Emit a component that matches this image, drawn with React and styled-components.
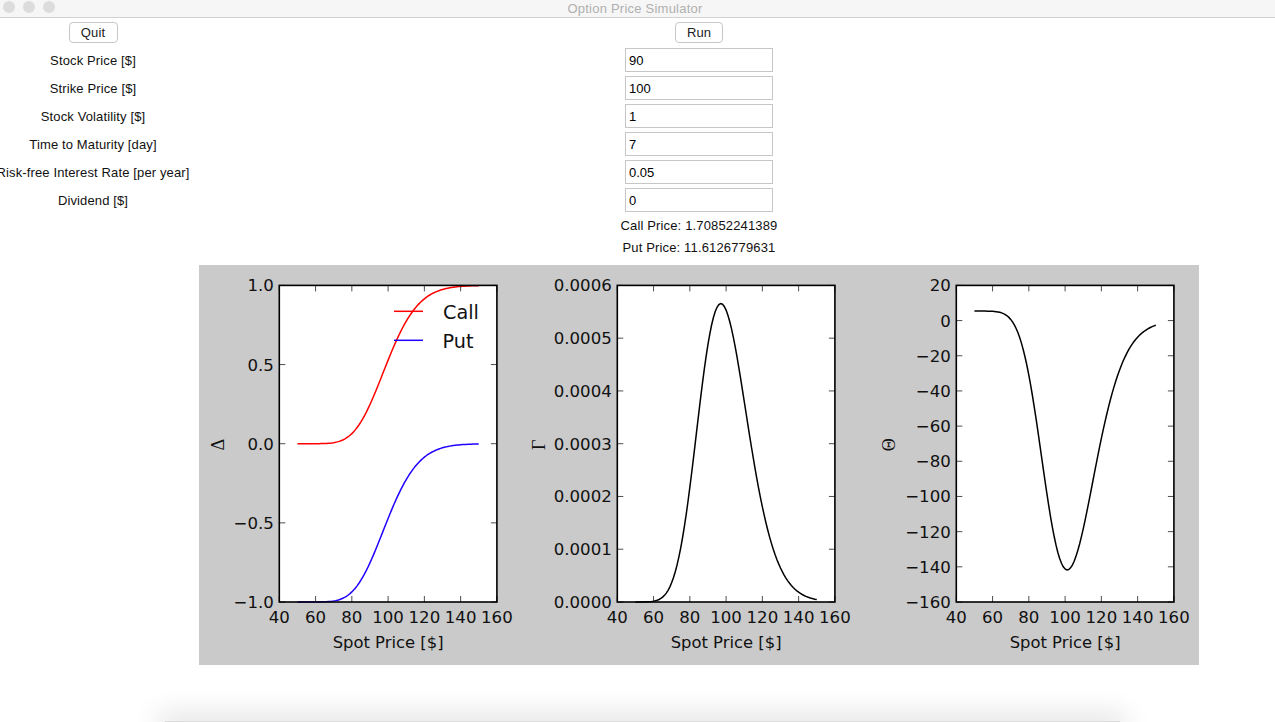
import { Fragment } from "react";
import styled, { createGlobalStyle } from "styled-components";

const GlobalStyle = createGlobalStyle`
html, body {
    margin: 0;
    height: 722px;
    overflow: hidden;
    background: #fff;
    font-family: "Liberation Sans", Arial, sans-serif;
}
`;

const Page = styled.div`
    position: relative;
    height: 722px;
    overflow: hidden;
`;

const TitleBar = styled.div`
    position: relative;
    box-sizing: border-box;
    height: 18px;
    padding-right: 5px;
    background: #f6f6f6;
    border-bottom: 1px solid #d2d2d2;
    display: flex;
    justify-content: center;
    align-items: center;
`;

const Title = styled.div`
    font-size: 13px;
    line-height: 15px;
    letter-spacing: 0.23px;
    color: #b0b0b0;
`;

const Lights = styled.div`
    position: absolute;
    left: 3px;
    top: 1px;
    display: flex;
    gap: 8px;
`;

const Light = styled.span`
    width: 12px;
    height: 12px;
    border-radius: 50%;
    background: #dcdcdc;
`;

const Form = styled.div`
    display: grid;
    grid-template-columns: 186px 1026px;
    grid-auto-rows: 28px;
    justify-items: center;
    align-items: center;
    font-size: 13px;
    letter-spacing: 0.13px;
    color: #111;
`;

const Button = styled.button`
    box-sizing: border-box;
    width: ${(p) => p.$width}px;
    height: 21px;
    padding: 0;
    background: #fff;
    border: 1px solid #c8c8c8;
    border-radius: 4px;
    font: 13px "Liberation Sans", Arial, sans-serif;
    letter-spacing: 0.13px;
    color: #222;
`;

const Label = styled.div`
    white-space: nowrap;
`;

const Field = styled.input`
    box-sizing: border-box;
    width: 148px;
    height: 24px;
    padding: 0 3px;
    border: 1px solid #c6c6c6;
    border-radius: 0;
    outline: none;
    font: 13px "Liberation Sans", Arial, sans-serif;
    color: #000;
`;

const Results = styled.div`
    display: grid;
    grid-template-columns: 186px 1026px;
    grid-auto-rows: 22px;
    align-items: center;
    font-size: 13px;
    letter-spacing: 0.15px;
    color: #111;
`;

const Result = styled.div`
    grid-column: 2;
    text-align: center;
`;

const PanelRow = styled.div`
    display: flex;
    padding: 7px 0 0 199px;
`;

const Panel = styled.div`
    width: 1000px;
    height: 400px;
    background: #cacaca;
    display: flex;
    gap: 20.4px;
`;

const Figure = styled.svg`
    display: block;
    width: 318px;
    height: 400px;
    flex: none;
    overflow: visible;
    font-family: "DejaVu Sans", sans-serif;
`;

const WindowEdge = styled.div`
    position: absolute;
    left: 165px;
    right: 155px;
    top: 721px;
    height: 6px;
    background: #dcdcdc;
    box-shadow: 0 0 28px 6px rgba(0, 0, 0, 0.14);
`;

const FRAME = { x: 80.3, y: 20.4, w: 217.6, h: 316.6 };
const XTICKS = [40, 60, 80, 100, 120, 140, 160];
const K = 100;
const V = 0.14;

const pdf = (d) => Math.exp((-d * d) / 2) / Math.sqrt(2 * Math.PI);
const cdf = (d) => {
    const t = 1 / (1 + 0.2316419 * Math.abs(d));
    const p = pdf(d) * t * (0.31938153 + t * (-0.356563782 + t * (1.781477937 + t * (-1.821255978 + t * 1.330274429))));
    return d >= 0 ? 1 - p : p;
};
const d1 = (s) => (Math.log(s / K) + (V * V) / 2) / V;

const callDelta = (s) => cdf(d1(s));
const putDelta = (s) => cdf(d1(s)) - 1;
const gamma = (s) => (0.000571 * 97.1 * pdf(d1(s))) / (0.3989 * s);
const theta = (s) => 5.4 * cdf(-(d1(s) - V)) - 3.62 * s * pdf(d1(s));

const curve = (fn, yMin, yMax) => {
    const pts = [];
    for (let s = 50; s <= 150; s += 1) {
        const x = FRAME.x + ((s - 40) / 120) * FRAME.w;
        const y = FRAME.y + ((yMax - fn(s)) / (yMax - yMin)) * FRAME.h;
        pts.push(`${x.toFixed(2)},${y.toFixed(2)}`);
    }
    return pts.join(" ");
};

const Plot = ({ yMin, yMax, yTicks, symbol, symbolX, lines, children }) => {
    const { x, y, w, h } = FRAME;
    const bottom = y + h;
    const right = x + w;
    const toY = (v) => y + ((yMax - v) / (yMax - yMin)) * h;
    return (
        <Figure viewBox="0 0 318 400">
            <rect x={x} y={y} width={w} height={h} fill="#fff" />
            {lines.map((l) => (
                <polyline key={l.id} points={curve(l.fn, yMin, yMax)} fill="none" stroke={l.color} strokeWidth="1.5" />
            ))}
            {children}
            <rect x={x} y={y} width={w} height={h} fill="none" stroke="#000" strokeWidth="1.6" />
            {XTICKS.map((t) => {
                const tx = x + ((t - 40) / 120) * w;
                return (
                    <g key={t}>
                        <path d={`M${tx} ${bottom}v-6M${tx} ${y}v6`} stroke="#000" strokeWidth="0.7" />
                        <text x={tx} y={bottom + 20.6} fontSize="16.6" textAnchor="middle" fill="#111">{t}</text>
                    </g>
                );
            })}
            {yTicks.map((t) => (
                <g key={t.label}>
                    <path d={`M${x} ${toY(t.v)}h6M${right} ${toY(t.v)}h-6`} stroke="#000" strokeWidth="0.7" />
                    <text x={x - 5.5} y={toY(t.v) + 6} fontSize="16.6" textAnchor="end" fill="#111">{t.label}</text>
                </g>
            ))}
            <text x={x + w / 2} y="382.5" fontSize="16.4" textAnchor="middle" fill="#111">Spot Price [$]</text>
            <text
                transform={`translate(${symbolX} ${y + h / 2 + 1}) rotate(-90)`}
                fontSize="18"
                textAnchor="middle"
                fill="#111"
                fontFamily="'Liberation Serif', serif"
            >
                {symbol}
            </text>
        </Figure>
    );
};

const Legend = () => (
    <g>
        <path d="M195 46.3h29" stroke="#f00" strokeWidth="1.5" />
        <text x="244" y="54" fontSize="19.2" fill="#111">Call</text>
        <path d="M195 75.3h29" stroke="#2000ff" strokeWidth="1.5" />
        <text x="243.5" y="83" fontSize="19.2" fill="#111">Put</text>
    </g>
);

const fields = [
    ["Stock Price [$]", "90"],
    ["Strike Price [$]", "100"],
    ["Stock Volatility [$]", "1"],
    ["Time to Maturity [day]", "7"],
    ["Risk-free Interest Rate [per year]", "0.05"],
    ["Dividend [$]", "0"],
];

const App = () => (
    <Page>
        <GlobalStyle />
        <TitleBar>
            <Lights>
                <Light />
                <Light />
                <Light />
            </Lights>
            <Title>Option Price Simulator</Title>
        </TitleBar>
        <Form>
            <Button $width={49}>Quit</Button>
            <Button $width={48}>Run</Button>
            {fields.map(([label, value]) => (
                <Fragment key={label}>
                    <Label>{label}</Label>
                    <Field defaultValue={value} />
                </Fragment>
            ))}
        </Form>
        <Results>
            <Result>Call Price: 1.70852241389</Result>
            <Result>Put Price: 11.6126779631</Result>
        </Results>
        <PanelRow>
            <Panel>
                <Plot
                    yMin={-1}
                    yMax={1}
                    symbol="Δ"
                    symbolX={25.3}
                    yTicks={[
                        { v: 1, label: "1.0" },
                        { v: 0.5, label: "0.5" },
                        { v: 0, label: "0.0" },
                        { v: -0.5, label: "−0.5" },
                        { v: -1, label: "−1.0" },
                    ]}
                    lines={[
                        { id: "call", color: "#f00", fn: callDelta },
                        { id: "put", color: "#2000ff", fn: putDelta },
                    ]}
                >
                    <Legend />
                </Plot>
                <Plot
                    yMin={0}
                    yMax={0.0006}
                    symbol="Γ"
                    symbolX={7.6}
                    yTicks={[0.0006, 0.0005, 0.0004, 0.0003, 0.0002, 0.0001, 0].map((v) => ({ v, label: v.toFixed(4) }))}
                    lines={[{ id: "gamma", color: "#000", fn: gamma }]}
                />
                <Plot
                    yMin={-160}
                    yMax={20}
                    symbol="Θ"
                    symbolX={19.2}
                    yTicks={[20, 0, -20, -40, -60, -80, -100, -120, -140, -160].map((v) => ({
                        v,
                        label: v < 0 ? `−${-v}` : `${v}`,
                    }))}
                    lines={[{ id: "theta", color: "#000", fn: theta }]}
                />
            </Panel>
        </PanelRow>
        <WindowEdge />
    </Page>
);

export default App;
